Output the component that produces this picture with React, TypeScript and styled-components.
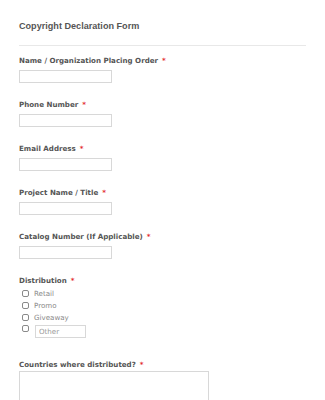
import React from 'react'
import styled, { createGlobalStyle } from 'styled-components'

const Global = createGlobalStyle`
body{
  margin:0;
  background:#fff;
}
`

const fields = [
  'Name / Organization Placing Order',
  'Phone Number',
  'Email Address',
  'Project Name / Title',
  'Catalog Number (If Applicable)',
]

const options = ['Retail', 'Promo', 'Giveaway']

const App = (): JSX.Element => {
  return (
    <Page>
      <Global />
      <Title>Copyright Declaration Form</Title>
      <Divider />
      {fields.map((f) => (
        <Field key={f}>
          <Label>{f}<Star>*</Star></Label>
          <TextInput />
        </Field>
      ))}
      <Field>
        <Label>Distribution<Star>*</Star></Label>
        <Options>
          {options.map((o) => (
            <Option key={o}>
              <Box />
              <OptionText>{o}</OptionText>
            </Option>
          ))}
          <OtherRow>
            <Box />
            <OtherInput placeholder="Other" />
          </OtherRow>
        </Options>
      </Field>
      <Field last>
        <Label>Countries where distributed?<Star>*</Star></Label>
        <Area />
      </Field>
    </Page>
  )
}

export default App

const Page = styled.div`
padding:18px 19px 0;
width:325px;
height:400px;
box-sizing:border-box;
overflow:hidden;
`
const Title = styled.div`
font-family:"Liberation Sans", Arial, sans-serif;
font-weight:700;
font-size:9.1px;
line-height:14px;
color:#555;
padding-top:1px;
`
const Divider = styled.div`
margin-top:12px;
height:1px;
width:287px;
background:#e8e8e8;
`
const Field = styled.div<{ last?: boolean }>`
display:flex;
flex-direction:column;
align-items:flex-start;
padding-top:${({ last }) => (last ? '15px' : '10px')};
padding-bottom:7px;
`
const Label = styled.div`
font-family:"DejaVu Sans", Verdana, sans-serif;
font-weight:700;
font-size:7.1px;
line-height:10px;
color:#555;
margin-bottom:4px;
`
const Star = styled.span`
color:#e3262a;
margin-left:4px;
`
const TextInput = styled.div`
width:93px;
height:13px;
box-sizing:border-box;
border:1px solid #d8d8d8;
background:#fff;
`
const Options = styled.div`
display:flex;
flex-direction:column;
margin-top:-3px;
padding-left:3px;
`
const Option = styled.div`
display:flex;
align-items:center;
height:12px;
gap:5px;
`
const Box = styled.span`
width:7px;
height:7px;
box-sizing:border-box;
border:1px solid #8a8a8a;
border-radius:2px;
flex-shrink:0;
`
const OptionText = styled.span`
font-family:"DejaVu Sans", Verdana, sans-serif;
font-size:7.1px;
color:#888;
`
const OtherRow = styled.div`
display:flex;
align-items:flex-start;
gap:6px;
padding-top:2px;
`
const OtherInput = styled.input`
width:51px;
height:13px;
box-sizing:border-box;
border:1px solid #d8d8d8;
padding:0 3px;
margin:0;
font-family:"DejaVu Sans", Verdana, sans-serif;
font-size:7.1px;
outline:none;
&::placeholder{
  color:#999;
}
`
const Area = styled.div`
width:190px;
height:60px;
margin-top:-3px;
box-sizing:border-box;
border:1px solid #d8d8d8;
`
